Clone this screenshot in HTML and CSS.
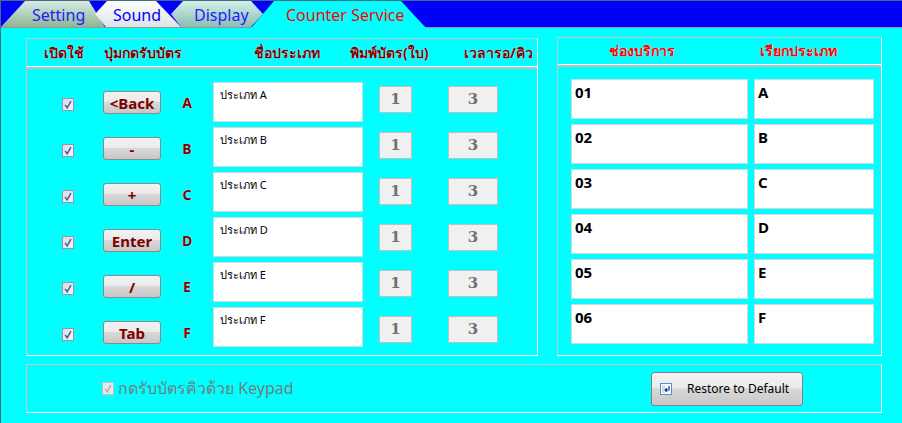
FILE: index.html
```html
<!DOCTYPE html>
<html>
<head>
    <meta charset="utf-8">
    <meta name="viewport" content="width=device-width, initial-scale=1">
    <title>Counter Service</title>
    <link rel="stylesheet" href="styles.css">
</head>
<body>
    <div class="tabs">
        <div class="tab tab-setting">Setting</div>
        <div class="tab tab-sound">Sound</div>
        <div class="tab tab-display">Display</div>
        <div class="tab tab-counter">Counter Service</div>
    </div>

    <div class="content">
        <div class="top-panels">
            <div class="panel panel-left">
                <div class="panel-head head-left">
                    <div class="hd-enable">เปิดใช้</div>
                    <div class="hd-key">ปุ่มกดรับบัตร</div>
                    <div class="hd-name">ชื่อประเภท</div>
                    <div class="hd-print">พิมพ์บัตร(ใบ)</div>
                    <div class="hd-time">เวลารอ/คิว</div>
                </div>
                <div class="panel-body body-left">
                    <div class="col col-check">
                        <span class="check"><svg viewBox="0 0 12 12"><path d="M2.5 6.5 L5 10 L9.5 2"/></svg></span>
                        <span class="check"><svg viewBox="0 0 12 12"><path d="M2.5 6.5 L5 10 L9.5 2"/></svg></span>
                        <span class="check"><svg viewBox="0 0 12 12"><path d="M2.5 6.5 L5 10 L9.5 2"/></svg></span>
                        <span class="check"><svg viewBox="0 0 12 12"><path d="M2.5 6.5 L5 10 L9.5 2"/></svg></span>
                        <span class="check"><svg viewBox="0 0 12 12"><path d="M2.5 6.5 L5 10 L9.5 2"/></svg></span>
                        <span class="check"><svg viewBox="0 0 12 12"><path d="M2.5 6.5 L5 10 L9.5 2"/></svg></span>
                    </div>
                    <div class="col col-key">
                        <button class="key-btn">&lt;Back</button>
                        <button class="key-btn">-</button>
                        <button class="key-btn">+</button>
                        <button class="key-btn">Enter</button>
                        <button class="key-btn">/</button>
                        <button class="key-btn">Tab</button>
                    </div>
                    <div class="col col-letter">
                        <div class="letter">A</div>
                        <div class="letter">B</div>
                        <div class="letter">C</div>
                        <div class="letter">D</div>
                        <div class="letter">E</div>
                        <div class="letter">F</div>
                    </div>
                    <div class="col col-name">
                        <div class="name-field">ประเภท A</div>
                        <div class="name-field">ประเภท B</div>
                        <div class="name-field">ประเภท C</div>
                        <div class="name-field">ประเภท D</div>
                        <div class="name-field">ประเภท E</div>
                        <div class="name-field">ประเภท F</div>
                    </div>
                    <div class="col col-print">
                        <div class="num-field">1</div>
                        <div class="num-field">1</div>
                        <div class="num-field">1</div>
                        <div class="num-field">1</div>
                        <div class="num-field">1</div>
                        <div class="num-field">1</div>
                    </div>
                    <div class="col col-time">
                        <div class="num-field">3</div>
                        <div class="num-field">3</div>
                        <div class="num-field">3</div>
                        <div class="num-field">3</div>
                        <div class="num-field">3</div>
                        <div class="num-field">3</div>
                    </div>
                </div>
            </div>

            <div class="panel panel-right">
                <div class="panel-head head-right">
                    <div class="hd-counter">ช่องบริการ</div>
                    <div class="hd-call">เรียกประเภท</div>
                </div>
                <div class="panel-body body-right">
                    <div class="big-field">01</div><div class="big-field">A</div>
                    <div class="big-field">02</div><div class="big-field">B</div>
                    <div class="big-field">03</div><div class="big-field">C</div>
                    <div class="big-field">04</div><div class="big-field">D</div>
                    <div class="big-field">05</div><div class="big-field">E</div>
                    <div class="big-field">06</div><div class="big-field">F</div>
                </div>
            </div>
        </div>

        <div class="panel panel-bottom">
            <label class="keypad">
                <span class="check check-off"><svg viewBox="0 0 12 12"><path d="M2.5 6.5 L5 10 L9.5 2"/></svg></span>
                กดรับบัตรคิวด้วย Keypad
            </label>
            <button class="restore-btn">
                <svg class="restore-icon" viewBox="0 0 12 12" width="12" height="12">
                    <rect x="0.5" y="0.5" width="11" height="11" fill="#fff" stroke="#5b8bd0"/>
                    <path d="M2 3h3M2 5h3M2 7h2M2 9h3" stroke="#9db8de" fill="none"/>
                    <path d="M9 3v4H5.5M7 5.2 5 7l2 1.8" stroke="#10309a" stroke-width="1.2" fill="none"/>
                </svg>
                <span>Restore to Default</span>
            </button>
        </div>
    </div>
</body>
</html>
```

FILE: styles.css
```css
* {
    margin: 0;
    padding: 0;
    box-sizing: border-box;
}

html, body {
    width: 902px;
    height: 423px;
    overflow: hidden;
}

body {
    background-color: #00ffff;
    border-left: 1px solid #4a6a80;
    border-top: 1px solid #4a6a80;
    font-family: Tahoma, "Noto Sans", "DejaVu Sans", sans-serif;
}

/* tab strip */
.tabs {
    display: flex;
    height: 26px;
    background-color: #0000ff;
    box-shadow: 0 1px 0 #7f9f9f;
}

.tab {
    height: 26px;
    font-size: 16px;
    line-height: 29px;
}

.tab-setting {
    width: 104px;
    padding-left: 31px;
    color: #2020ff;
    background: linear-gradient(#d6ece4, #8fb592);
    clip-path: polygon(0 100%, 24px 0, 88px 0, 100% 100%);
}

.tab-sound {
    width: 86px;
    margin-left: -10px;
    padding-left: 18px;
    color: #0000ff;
    background: linear-gradient(#ffffff, #dfe3e3);
    clip-path: polygon(12px 0, 61px 0, 100% 100%, 11px 100%, 0 13px);
}

.tab-display {
    width: 92px;
    margin-left: -10px;
    padding-left: 23px;
    color: #2020ff;
    background: linear-gradient(#d2f0ea, #8cbcb0);
    clip-path: polygon(12px 0, 80px 0, 100% 13px, 80px 100%, 10px 100%, 0 13px);
}

.tab-counter {
    width: 175px;
    margin-left: -12px;
    padding-left: 35px;
    color: #ff0000;
    background-color: #00ffff;
    clip-path: polygon(23px 0, 150px 0, 100% 100%, 0 100%);
    position: relative;
    height: 27px;
}

/* panels */
.content {
    padding: 10px 19px 0 25px;
    display: flex;
    flex-direction: column;
    gap: 8px;
}

.top-panels {
    display: flex;
    gap: 19px;
    align-items: flex-end;
}

.panel {
    border: 1px solid #ffffff;
    border-top-color: #c0c8c8;
    border-left-color: #c0c8c8;
}

.panel-left {
    width: 512px;
    height: 318px;
}

.panel-right {
    width: 325px;
    height: 319px;
}

.panel-head {
    display: flex;
    align-items: center;
    font-size: 14px;
    font-weight: bold;
    border-bottom: 1px solid #ffffff;
    box-shadow: 0 2px 0 #b8c4c4;
    text-shadow: 0 0 1px #ffffff;
}

.head-left {
    height: 28px;
    color: #800000;
}

.head-right {
    height: 27px;
    color: #ff0000;
}

.hd-enable { width: 77px; padding-left: 17px; }
.hd-key { width: 125px; padding-left: 0; }
.hd-name { width: 121px; padding-left: 25px; }
.hd-print { width: 111px; }
.hd-time { width: 76px; padding-left: 3px; }

.hd-counter { width: 186px; padding-left: 51px; }
.hd-call { padding-left: 16px; }

/* left body, one column per field */
.body-left {
    display: flex;
}

.col {
    display: flex;
    flex-direction: column;
}

.col-check {
    width: 76px;
    padding: 31px 0 0 35px;
    gap: 33px;
}

.check {
    display: block;
    width: 12px;
    height: 13px;
    border: 1px solid #8f98b0;
    background: linear-gradient(135deg, #d8dce0, #f4f4f6);
}

.check svg {
    display: block;
    width: 100%;
    height: 100%;
}

.check path {
    fill: none;
    stroke: #4a5aa0;
    stroke-width: 1.8;
}

.col-key {
    width: 58px;
    padding-top: 24px;
    gap: 23px;
}

.key-btn {
    width: 58px;
    height: 23px;
    border: 1px solid #8a8a8a;
    border-radius: 3px;
    background: linear-gradient(#f2f2f2 0, #ebebeb 45%, #d8d8d8 50%, #c8c8c8 100%);
    color: #800000;
    font-family: inherit;
    font-size: 15px;
    font-weight: bold;
}

.col-letter {
    width: 52px;
    padding-top: 24px;
    gap: 23px;
    align-items: center;
}

.letter {
    width: 52px;
    height: 23px;
    line-height: 23px;
    text-align: center;
    padding-right: 0;
    color: #800000;
    font-size: 14px;
    font-weight: bold;
    text-shadow: 0 0 1px #ffffff;
}

.col-name {
    width: 166px;
    padding-top: 15px;
    gap: 5px;
}

.name-field {
    width: 150px;
    height: 40px;
    background-color: #ffffff;
    border: 1px solid #d0d8d8;
    padding: 3px 6px;
    font-size: 11px;
    color: #000000;
}

.col-print {
    width: 69px;
    padding-top: 19px;
    gap: 19px;
}

.col-print .num-field {
    width: 33px;
}

.col-time {
    padding-top: 19px;
    gap: 19px;
}

.col-time .num-field {
    width: 50px;
}

.num-field {
    height: 27px;
    line-height: 25px;
    text-align: center;
    background-color: #f0f0f0;
    border: 1px solid #c0c0c0;
    color: #707070;
    font-family: "DejaVu Serif", serif;
    font-size: 15px;
    font-weight: bold;
}

/* right body */
.body-right {
    display: grid;
    grid-template-columns: 177px 120px;
    grid-auto-rows: 40px;
    column-gap: 6px;
    row-gap: 5px;
    padding: 14px 0 0 13px;
}

.big-field {
    background-color: #ffffff;
    border: 1px solid #d0d8d8;
    padding: 2px 3px;
    color: #000000;
    font-size: 15px;
    font-weight: bold;
}

/* bottom strip */
.panel-bottom {
    width: 856px;
    height: 49px;
    display: flex;
    align-items: center;
    justify-content: space-between;
    padding: 0 78px 0 75px;
}

.keypad {
    display: flex;
    align-items: center;
    gap: 4px;
    color: #708080;
    font-size: 16px;
}

.check-off {
    background: #e8e8e8;
    border-color: #c0c0c0;
}

.check-off path {
    stroke: #b0b0b0;
}

.restore-btn {
    display: flex;
    align-items: center;
    gap: 15px;
    width: 152px;
    height: 34px;
    padding-left: 8px;
    border: 1px solid #808080;
    border-radius: 3px;
    background: linear-gradient(#f2f2f2 0, #ebebeb 45%, #d8d8d8 50%, #c8c8c8 100%);
    color: #000000;
    font-family: inherit;
    font-size: 12px;
}

.restore-icon {
    flex: none;
}
```
